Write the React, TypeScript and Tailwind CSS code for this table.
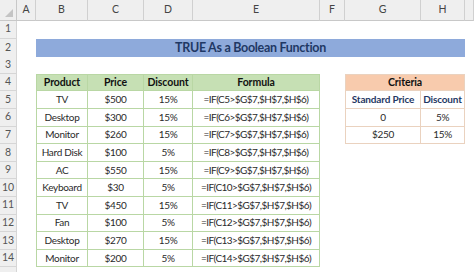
import type { ReactNode } from "react";

// Worksheet grid: row header + columns A..I
const COLS = "17px 19px 52px 56px 49px 127px 25px 76px 44px 1fr";
const LETTERS = ["A", "B", "C", "D", "E", "F", "G", "H", ""];

const products: [string, string, string][] = [
  ["TV", "$500", "15%"],
  ["Desktop", "$300", "15%"],
  ["Monitor", "$260", "15%"],
  ["Hard Disk", "$100", "5%"],
  ["AC", "$550", "15%"],
  ["Keyboard", "$30", "5%"],
  ["TV", "$450", "15%"],
  ["Fan", "$100", "5%"],
  ["Desktop", "$270", "15%"],
  ["Monitor", "$200", "5%"],
];

const font = { fontFamily: "Lato, 'Open Sans', sans-serif" };

function Row({ n, children }: { n?: number; children?: ReactNode }) {
  return (
    <div className="grid h-[17.6px]" style={{ gridTemplateColumns: COLS }}>
      <div className="flex items-center justify-center border-r border-b border-[#d6d6d6] bg-[#efefef] text-[10.5px] tracking-normal text-[#555]">
        {n}
      </div>
      {children}
    </div>
  );
}

function Cell({
  children,
  className = "",
}: {
  children?: ReactNode;
  className?: string;
}) {
  return (
    <div className={`flex items-center justify-center whitespace-nowrap overflow-hidden ${className}`}>
      {children}
    </div>
  );
}

export default function App() {
  const g = "border-[#b9d7a4]";
  const o = "border-[#ead2bf]";
  const head = "bg-[#c6e0b4] font-bold text-[10.5px] text-[#111] tracking-[-0.1px]";

  return (
    <div className="h-[272px] w-[474px] overflow-hidden bg-white text-[10px] tracking-[-0.3px] text-[#2a2a2a]" style={font}>
      {/* column letters */}
      <div className="grid h-[21px]" style={{ gridTemplateColumns: COLS }}>
        <div className="relative border-r border-b border-[#c8c8c8] bg-[#efefef]">
          <svg className="absolute bottom-[3px] right-[3px]" width="8" height="8" viewBox="0 0 8 8">
            <path d="M8 0 L8 8 L0 8 Z" fill="#c4c4c4" />
          </svg>
        </div>
        {LETTERS.map((l, i) => (
          <div
            key={i}
            className="flex items-center justify-center border-r border-b border-[#d0d0d0] border-b-[#c8c8c8] bg-[#efefef] text-[10.5px] tracking-normal text-[#444]"
          >
            {l}
          </div>
        ))}
      </div>

      <Row n={1} />

      <Row n={2}>
        <div />
        <div className="col-span-7 flex items-center justify-center bg-[#8eaadb] text-[12.5px] font-bold tracking-[-0.3px] text-[#1f3864]">
          TRUE As a Boolean Function
        </div>
      </Row>

      <Row n={3} />

      <Row n={4}>
        <div />
        <Cell className={`border-y border-l border-r ${g} ${head}`}>Product</Cell>
        <Cell className={`border-y border-r ${g} ${head}`}>Price</Cell>
        <Cell className={`border-y border-r ${g} ${head}`}>Discount</Cell>
        <Cell className={`border-y border-r ${g} ${head}`}>Formula</Cell>
        <div />
        <Cell className={`col-span-2 border ${o} bg-[#f8cbad] font-bold text-[10.5px] tracking-[-0.1px] text-[#111]`}>Criteria</Cell>
      </Row>

      {products.map(([name, price, disc], i) => {
        const r = i + 5;
        return (
          <Row key={r} n={r}>
            <div />
            <Cell className={`border-b border-l border-r ${g}`}>{name}</Cell>
            <Cell className={`border-b border-r ${g}`}>{price}</Cell>
            <Cell className={`border-b border-r ${g}`}>{disc}</Cell>
            <Cell className={`border-b border-r ${g} tracking-[-0.55px]`}>{`=IF(C${r}>$G$7,$H$7,$H$6)`}</Cell>
            <div />
            {r === 5 && (
              <>
                <Cell className={`border-b border-l border-r ${o} font-bold text-[10px] tracking-[-0.15px] text-[#1f3864]`}>Standard Price</Cell>
                <Cell className={`border-b border-r ${o} font-bold text-[10px] tracking-[-0.15px] text-[#1f3864]`}>Discount</Cell>
              </>
            )}
            {r === 6 && (
              <>
                <Cell className={`border-b border-l border-r ${o}`}>0</Cell>
                <Cell className={`border-b border-r ${o}`}>5%</Cell>
              </>
            )}
            {r === 7 && (
              <>
                <Cell className={`border-b border-l border-r ${o}`}>$250</Cell>
                <Cell className={`border-b border-r ${o}`}>15%</Cell>
              </>
            )}
          </Row>
        );
      })}

      {/* partly visible row below the data */}
      <Row />
    </div>
  );
}
